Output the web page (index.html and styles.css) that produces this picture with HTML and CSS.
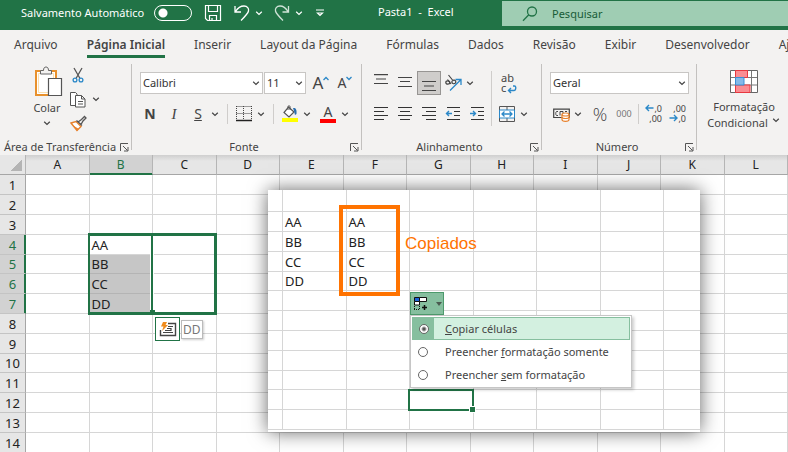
FILE: index.html
```
<!DOCTYPE html>
<html lang="pt-BR">
<head>
  <meta charset="UTF-8" />
  <meta name="viewport" content="width=device-width, initial-scale=1.0" />
  <title>Pasta1 - Excel</title>
  <link rel="stylesheet" href="styles.css">
</head>
<body>
  <svg class="defs" aria-hidden="true">
    <symbol id="chev" viewBox="0 0 10 10"><path d="M2.200 3.800 5 6.500l2.800-2.700" fill="none" stroke="currentColor" stroke-width="1.200"/></symbol>
    <symbol id="launcher" viewBox="0 0 9 9"><path d="M.5 8V.5H8M3 3l4.500 4.500M8 4v4H4" fill="none" stroke="#555" /></symbol>
  </svg>

  <header class="topbar">
    <div class="quick">
      <label class="autosave">Salvamento Automático <input type="checkbox" class="toggle"></label>
      <button class="q-btn save" aria-label="Salvar">
        <svg width="18" height="18" viewBox="0 0 18 18" fill="none" stroke="#fff" stroke-width="1.200"><path d="M1.500 1.500h15v15H3.500l-2-2zM4.500 1.500v6h9v-6M5.500 16.500v-5h7v5M8 16v-2"/></svg>
      </button>
      <button class="q-btn undo" aria-label="Desfazer">
        <svg width="16" height="18" viewBox="0 0 16 18" fill="none" stroke="#fff" stroke-width="1.300"><path d="M1 2v6h6M1.500 7.500C4 3.500 7 2 10 2c3.500 0 5 2.500 4.500 5-.5 2.500-4 6-7.500 9.500"/></svg>
      </button>
      <svg class="chev light"><use href="#chev"/></svg>
      <button class="q-btn redo" aria-label="Refazer">
        <svg width="16" height="18" viewBox="0 0 16 18" fill="none" stroke="#cfe3d7" stroke-width="1.300"><path d="M14.500 2v6h-6M14 7.500C11.500 3.500 9 2 6 2 2.500 2 1 4.500 1.500 7 2 9.500 5.500 13 9 16.500"/></svg>
      </button>
      <svg class="chev light"><use href="#chev"/></svg>
      <button class="q-btn more" aria-label="Personalizar">
        <svg width="8" height="8" viewBox="0 0 8 8" fill="none" stroke="#fff" stroke-width="1.200"><path d="M0 1h8M1.500 4 4 6.500 6.500 4z"/></svg>
      </button>
    </div>
    <div class="doc-title">Pasta1&nbsp; -&nbsp; Excel</div>
    <label class="search">
      <svg width="16" height="16" viewBox="0 0 16 16" fill="none" stroke="#217346" stroke-width="1.300"><circle cx="10" cy="5.500" r="4.500"/><path d="M6.800 8.800 1 14.800"/></svg>
      <input type="text" placeholder="Pesquisar">
    </label>
  </header>

  <nav class="tabs">
    <a href="#">Arquivo</a>
    <a href="#" class="active">Página Inicial</a>
    <a href="#">Inserir</a>
    <a href="#">Layout da Página</a>
    <a href="#">Fórmulas</a>
    <a href="#">Dados</a>
    <a href="#">Revisão</a>
    <a href="#">Exibir</a>
    <a href="#">Desenvolvedor</a>
    <a href="#">Ajuda</a>
  </nav>

  <section class="ribbon">
    <div class="group g-clip">
      <div class="clip-tools">
        <button class="big paste">
          <svg width="30" height="32" viewBox="0 0 30 32" fill="none">
            <path d="M2 5h20v24H2z" fill="#fff" stroke="#e8912d" stroke-width="2"/>
            <path d="M4.500 7.500h15v19h-15z" stroke="#fbe0b0"/>
            <path d="M6.500 8V4.500h3C9.500 2 10.500 1 12 1s2.500 1 2.500 3.500h3V8z" fill="#f3f2f1" stroke="#666"/>
            <path d="M14.500 12.500h13v17h-13z" fill="#fff" stroke="#555" stroke-width="1.200"/>
          </svg>
          <span>Colar</span>
          <svg class="chev"><use href="#chev"/></svg>
        </button>
        <div class="small-tools">
          <button class="btn" aria-label="Recortar">
            <svg width="16" height="16" viewBox="0 0 16 16" fill="none"><path d="M4 1l6 10.500M12 1 6 11.500" stroke="#555" stroke-width="1.300"/><circle cx="5" cy="13" r="1.900" stroke="#2b88c8" stroke-width="1.300"/><circle cx="11" cy="13" r="1.900" stroke="#2b88c8" stroke-width="1.300"/></svg>
          </button>
          <div class="drop">
            <button class="btn" aria-label="Copiar">
              <svg width="18" height="17" viewBox="0 0 18 17" fill="#fff" stroke="#555"><path d="M1.500 14.500V1.500h5l1.500 1.500v11.500z"/><path d="M6.500 4.500h6l3.500 3.500v8h-9.500zM12.500 4.500V8H16M9 10.500h5M9 13h5"/></svg>
            </button>
            <svg class="chev"><use href="#chev"/></svg>
          </div>
          <button class="btn" aria-label="Pincel de Formatação">
            <svg width="18" height="17" viewBox="0 0 18 17"><path d="M2 8l5-1.500 5 5L8 15.500z" fill="#fff" stroke="#e8822d" stroke-width="1.400"/><path d="M4 10.500l6 3.500-2 2z" fill="#e8822d"/><path d="M7.500 5.500l5.500 5M9 7l3.500-2.500L15.500 1.500 17 3l-3 3-2 3.500" fill="#f3f2f1" stroke="#555" stroke-width="1.300"/></svg>
          </button>
        </div>
      </div>
      <div class="group-label"><span>Área de Transferência</span><svg class="launch"><use href="#launcher"/></svg></div>
    </div>

    <div class="group g-font">
      <div class="row">
        <div class="combo font-name">
          <select aria-label="Fonte"><option>Calibri</option></select>
          <svg class="chev"><use href="#chev"/></svg>
        </div>
        <div class="combo font-size">
          <select aria-label="Tamanho"><option>11</option></select>
          <svg class="chev"><use href="#chev"/></svg>
        </div>
        <button class="btn grow" aria-label="Aumentar fonte">A<svg width="6" height="5" viewBox="0 0 6 5" fill="none" stroke="#2b88c8" stroke-width="1.300"><path d="M.5 4 3 1.500 5.500 4"/></svg></button>
        <button class="btn shrink" aria-label="Diminuir fonte">A<svg width="6" height="5" viewBox="0 0 6 5" fill="none" stroke="#2b88c8" stroke-width="1.300"><path d="M.5 1 3 3.500 5.500 1"/></svg></button>
      </div>
      <div class="row">
        <button class="btn bold">N</button>
        <button class="btn italic">I</button>
        <button class="btn under">S</button>
        <svg class="chev"><use href="#chev"/></svg>
        <span class="sep"></span>
        <div class="split">
          <button class="ico" aria-label="Bordas">
            <svg width="16" height="16" viewBox="0 0 16 16" fill="none" stroke="#444"><path d="M.5.5h15M.5 7.500h15M.5 0v13M7.500 0v13M15.500 0v13" stroke-dasharray="1 1"/><path d="M0 14.500h16" stroke="#222" stroke-width="1.500"/></svg>
          </button>
          <svg class="chev"><use href="#chev"/></svg>
        </div>
        <span class="sep"></span>
        <div class="split">
          <button class="ico" aria-label="Cor de preenchimento">
            <svg width="16" height="18" viewBox="0 0 16 18"><path d="M6.500 2 12 7l-5 5-5-4.500z" fill="#fff" stroke="#555" stroke-width="1.200"/><path d="M6 5V1.500c0-1 2-1 2 0V5" fill="none" stroke="#555"/><path d="M11 3c2.500-.5 4 1 3.500 6l-1.500 1-1-4z" fill="#2b6fb0"/><path d="M0 13h16v4H0z" fill="#ff0"/></svg>
          </button>
          <svg class="chev"><use href="#chev"/></svg>
        </div>
        <div class="split last">
          <button class="ico font-color" aria-label="Cor da fonte">A</button>
          <svg class="chev"><use href="#chev"/></svg>
        </div>
      </div>
      <div class="group-label"><span>Fonte</span><svg class="launch"><use href="#launcher"/></svg></div>
    </div>

    <div class="group g-align">
      <div class="align-tools">
        <div class="col">
          <div class="row">
            <button class="btn" aria-label="Alinhar em cima"><svg width="16" height="18" viewBox="0 0 16 18" stroke="#444" stroke-width="1.200"><path d="M1 .7h14M3 5h10M1 9.500h14"/></svg></button>
            <button class="btn" aria-label="Alinhar no meio"><svg width="16" height="18" viewBox="0 0 16 18" stroke="#444" stroke-width="1.200"><path d="M1 3.500h14M3 7.500h10M1 12.500h14"/></svg></button>
            <button class="btn pressed" aria-label="Alinhar embaixo"><svg width="16" height="18" viewBox="0 0 16 18" stroke="#444" stroke-width="1.200"><path d="M1 7.500h14M3 12h10M1 16.500h14"/></svg></button>
            <button class="btn" aria-label="Orientação"><svg width="18" height="18" viewBox="0 0 18 18" fill="none"><g stroke="#444" stroke-width="1.200"><ellipse cx="3.800" cy="8.500" rx="2" ry="1.700"/><path d="M3.500 5.500 7 10M8.300 6.800a2 1.800 0 1 0 .1-.1M4.500 1l4 5"/></g><path d="M6 16.500 16.500 6M11.500 5.500H17V11" stroke="#2b88c8" stroke-width="1.300"/></svg></button>
            <svg class="chev"><use href="#chev"/></svg>
          </div>
          <div class="row">
            <button class="btn" aria-label="Alinhar à esquerda"><svg width="16" height="16" viewBox="0 0 16 16" stroke="#333" stroke-width="1.200"><path d="M1 1.500h14M1 5.500h10M1 9.500h14M1 13.500h10"/></svg></button>
            <button class="btn" aria-label="Centralizar"><svg width="16" height="16" viewBox="0 0 16 16" stroke="#333" stroke-width="1.200"><path d="M1 1.500h14M3 5.500h10M1 9.500h14M3 13.500h10"/></svg></button>
            <button class="btn" aria-label="Alinhar à direita"><svg width="16" height="16" viewBox="0 0 16 16" stroke="#333" stroke-width="1.200"><path d="M1 1.500h14M5 5.500h10M1 9.500h14M5 13.500h10"/></svg></button>
            <button class="btn" aria-label="Diminuir recuo"><svg width="16" height="16" viewBox="0 0 16 16" fill="none" stroke="#333" stroke-width="1.200"><path d="M2 1.500h13M9 5.500h6M9 9.500h6M2 13.500h13"/><path d="M7 7.500H1.500M4 5 1.500 7.500 4 10" stroke="#2b88c8" stroke-width="1.400"/></svg></button>
            <button class="btn" aria-label="Aumentar recuo"><svg width="16" height="16" viewBox="0 0 16 16" fill="none" stroke="#333" stroke-width="1.200"><path d="M2 1.500h13M9 5.500h6M9 9.500h6M2 13.500h13"/><path d="M1 7.500h5.500M4 5l2.500 2.500L4 10" stroke="#2b88c8" stroke-width="1.400"/></svg></button>
          </div>
        </div>
        <span class="sep tall"></span>
        <div class="col">
          <div class="row">
            <button class="btn wrap" aria-label="Quebrar texto"><span>ab</span><span>c</span><svg width="10" height="9" viewBox="0 0 10 9" fill="none" stroke="#2b88c8" stroke-width="1.400"><path d="M6 1h1.500C9.500 1 9 5.500 7 5.500H1.500M4 3 1.500 5.500 4 8"/></svg></button>
          </div>
          <div class="row">
            <button class="btn" aria-label="Mesclar"><svg width="16" height="16" viewBox="0 0 16 16" fill="none"><path d="M.5.5h15v15H.5zM8 0v4M8 12v4" stroke="#555"/><path d="M.5 4h15v8H.5z" fill="#fff" stroke="#2b88c8"/><path d="M3 8h10M5.500 5.500 3 8l2.500 2.500M10.500 5.500 13 8l-2.500 2.500" stroke="#2b88c8" stroke-width="1.300"/></svg></button>
            <svg class="chev"><use href="#chev"/></svg>
          </div>
        </div>
      </div>
      <div class="group-label"><span>Alinhamento</span><svg class="launch"><use href="#launcher"/></svg></div>
    </div>

    <div class="group g-num">
      <div class="row">
        <div class="combo num-format">
          <select aria-label="Formato"><option>Geral</option></select>
          <svg class="chev"><use href="#chev"/></svg>
        </div>
      </div>
      <div class="row">
        <button class="btn" aria-label="Moeda"><svg width="17" height="16" viewBox="0 0 17 16" fill="none"><path d="M.7 3.200h15.600v8.300H.7z" stroke="#444" stroke-width="1.200"/><path d="M5 5.500H3.500c-1 .5-1 3.500 0 4H5M7 9.500v-4h3v4M12 5.500h2" stroke="#444"/><path d="M9 8.500v5c0 2.500 7 2.500 7 0v-5" fill="#fff" stroke="#e8822d" stroke-width="1.200"/><ellipse cx="12.500" cy="8.500" rx="3.500" ry="1.500" fill="#fff" stroke="#e8822d" stroke-width="1.200"/><path d="M9 11c0 2 7 2 7 0" stroke="#e8822d" stroke-width="1.200"/></svg></button>
        <svg class="chev"><use href="#chev"/></svg>
        <button class="btn percent">%</button>
        <button class="btn thousands">000</button>
        <span class="sep slim"></span>
        <button class="btn decimal" aria-label="Aumentar casas decimais"><span><svg width="9" height="8" viewBox="0 0 9 8" fill="none" stroke="#2b88c8" stroke-width="1.400"><path d="M8.500 4H1M4 1 1 4l3 3"/></svg>,0</span><span>,00</span></button>
        <button class="btn decimal" aria-label="Diminuir casas decimais"><span>,00</span><span><svg width="9" height="8" viewBox="0 0 9 8" fill="none" stroke="#2b88c8" stroke-width="1.400"><path d="M.5 4H8M5 1l3 3-3 3"/></svg>,0</span></button>
      </div>
      <div class="group-label"><span>Número</span><svg class="launch"><use href="#launcher"/></svg></div>
    </div>

    <div class="group g-styles">
      <button class="big cond">
        <svg width="28" height="23" viewBox="0 0 28 23"><path d="M.5.500h27v22H.5z" fill="#fff"/><path d="M.5 7.500h27M.5 15h27M5.500.5v22M21.500.5v22" stroke="#777" fill="none"/><path d="M.5.500h27v22H.5z" fill="none" stroke="#666"/><path d="M5.500.500h12v7h-12zM5.500 15h14.500v7.500H5.500z" fill="#f98d92" stroke="#e8383f"/><path d="M5.500 7.500h8.500V15H5.500z" fill="#83b9e8" stroke="#3a8fd4"/></svg>
        <span>Formatação</span>
        <span class="with-chev">Condicional <svg class="chev"><use href="#chev"/></svg></span>
      </button>
      <button class="big as-table"><span>Formatar como</span></button>
    </div>
  </section>

  <main class="sheet">
    <table class="grid">
      <thead>
        <tr><th class="corner"></th><th>A</th><th class="sel">B</th><th>C</th><th>D</th><th>E</th><th>F</th><th>G</th><th>H</th><th>I</th><th>J</th><th>K</th><th>L</th></tr>
      </thead>
      <tbody>
        <tr><th>1</th><td></td><td></td><td></td><td></td><td></td><td></td><td></td><td></td><td></td><td></td><td></td><td></td></tr>
        <tr><th>2</th><td></td><td></td><td></td><td></td><td></td><td></td><td></td><td></td><td></td><td></td><td></td><td></td></tr>
        <tr><th>3</th><td></td><td></td><td></td><td></td><td></td><td></td><td></td><td></td><td></td><td></td><td></td><td></td></tr>
        <tr><th class="sel">4</th><td></td><td>AA</td><td></td><td></td><td></td><td></td><td></td><td></td><td></td><td></td><td></td><td></td></tr>
        <tr><th class="sel">5</th><td></td><td class="picked">BB</td><td></td><td></td><td></td><td></td><td></td><td></td><td></td><td></td><td></td><td></td></tr>
        <tr><th class="sel">6</th><td></td><td class="picked">CC</td><td></td><td></td><td></td><td></td><td></td><td></td><td></td><td></td><td></td><td></td></tr>
        <tr><th class="sel">7</th><td></td><td class="picked">DD</td><td></td><td></td><td></td><td></td><td></td><td></td><td></td><td></td><td></td><td></td></tr>
        <tr><th>8</th><td></td><td></td><td></td><td></td><td></td><td></td><td></td><td></td><td></td><td></td><td></td><td></td></tr>
        <tr><th>9</th><td></td><td></td><td></td><td></td><td></td><td></td><td></td><td></td><td></td><td></td><td></td><td></td></tr>
        <tr><th>10</th><td></td><td></td><td></td><td></td><td></td><td></td><td></td><td></td><td></td><td></td><td></td><td></td></tr>
        <tr><th>11</th><td></td><td></td><td></td><td></td><td></td><td></td><td></td><td></td><td></td><td></td><td></td><td></td></tr>
        <tr><th>12</th><td></td><td></td><td></td><td></td><td></td><td></td><td></td><td></td><td></td><td></td><td></td><td></td></tr>
        <tr><th>13</th><td></td><td></td><td></td><td></td><td></td><td></td><td></td><td></td><td></td><td></td><td></td><td></td></tr>
        <tr><th>14</th><td></td><td></td><td></td><td></td><td></td><td></td><td></td><td></td><td></td><td></td><td></td><td></td></tr>
      </tbody>
    </table>

    <div class="range"><span class="range-mid"></span><span class="handle"></span></div>
    <div class="drag-tip">
      <button class="flash" aria-label="Preenchimento relâmpago">
        <svg width="18" height="17" viewBox="0 0 18 17" fill="none"><path d="M9 2.500h7.500v12H1.500V9" stroke="#444" stroke-width="1.400"/><path d="M9 5.500h5M4 11.500h10M6 9.500h6v-2H8" stroke="#444" stroke-width="1.200"/><path d="M4 1h4L6.500 4H9l-6 6 1.500-4.500H2z" fill="#f08c1e"/></svg>
      </button>
      <span class="tip">DD</span>
    </div>

    <div class="panel">
      <table class="grid mini">
        <colgroup><col class="c-first"><col><col><col><col><col><col><col class="c-last"></colgroup>
        <tbody>
          <tr><td></td><td></td><td></td><td></td><td></td><td></td><td></td><td></td></tr>
          <tr><td></td><td>AA</td><td>AA</td><td></td><td></td><td></td><td></td><td></td></tr>
          <tr><td></td><td>BB</td><td>BB</td><td></td><td></td><td></td><td></td><td></td></tr>
          <tr><td></td><td>CC</td><td>CC</td><td></td><td></td><td></td><td></td><td></td></tr>
          <tr><td></td><td>DD</td><td>DD</td><td></td><td></td><td></td><td></td><td></td></tr>
          <tr><td></td><td></td><td></td><td></td><td></td><td></td><td></td><td></td></tr>
          <tr><td></td><td></td><td></td><td></td><td></td><td></td><td></td><td></td></tr>
          <tr><td></td><td></td><td></td><td></td><td></td><td></td><td></td><td></td></tr>
          <tr><td></td><td></td><td></td><td></td><td></td><td></td><td></td><td></td></tr>
          <tr><td></td><td></td><td></td><td></td><td></td><td></td><td></td><td></td></tr>
          <tr><td></td><td></td><td></td><td></td><td></td><td></td><td></td><td></td></tr>
          <tr><td></td><td></td><td></td><td></td><td></td><td></td><td></td><td></td></tr>
        </tbody>
      </table>

      <div class="highlight"></div>
      <div class="note">Copiados</div>
      <div class="cursor"><span class="handle"></span></div>

      <button class="fill-btn" aria-label="Opções de autopreenchimento">
        <svg width="16" height="16" viewBox="0 0 16 16" fill="#fff" stroke="#111"><path d="M1.500 1.500h5v4h-5z" fill="#1b62d6"/><path d="M6.500 1.500h7v4h-7zM1.500 5.500h5v3.500h-5z"/><path d="M1 13.500h6M1.500 10v3M6.500 10v3" stroke-dasharray="1 1" fill="none"/><path d="M9 11.500h5M11.500 9v5" stroke-width="1.500"/></svg>
        <svg width="6" height="4" viewBox="0 0 6 4"><path d="M0 0h6L3 4z" fill="#4a5a50"/></svg>
      </button>
      <div class="menu">
        <label class="menu-item on"><span class="mark"><input type="radio" name="fill" checked></span><span><u>C</u>opiar células</span></label>
        <label class="menu-item"><span class="mark"><input type="radio" name="fill"></span><span>Preencher <u>f</u>ormatação somente</span></label>
        <label class="menu-item"><span class="mark"><input type="radio" name="fill"></span><span>Preencher <u>s</u>em formatação</span></label>
      </div>
    </div>
  </main>
</body>
</html>
```
FILE: styles.css
```
* {
  box-sizing: border-box;
}

body {
  margin: 0;
  height: 100vh;
  overflow: hidden;
  font-family: 'Noto Sans', 'Open Sans', sans-serif;
  font-size: 11px;
  line-height: 16px;
  color: #444;
  background: #fff;
}

button {
  border: none;
  background: none;
  padding: 0;
  margin: 0;
  font: inherit;
  color: inherit;
}

svg {
  flex: none;
}

.defs {
  position: absolute;
  width: 0;
  height: 0;
}

.chev {
  width: 10px;
  height: 10px;
  color: #444;
}

.launch {
  width: 9px;
  height: 9px;
}

/* title bar */
.topbar {
  display: grid;
  grid-template-columns: 330px 172px 1fr;
  height: 30px;
  padding-bottom: 4px;
  background: #217346;
  color: #fff;
}

.quick {
  display: flex;
  align-items: center;
  padding-left: 21px;
}

.autosave {
  display: flex;
  align-items: center;
  justify-content: space-between;
  width: 171px;
  white-space: nowrap;
}

.toggle {
  appearance: none;
  width: 38px;
  height: 16px;
  margin: 0;
  border: 1px solid #fff;
  border-radius: 8px;
  background: radial-gradient(circle at 8px 7px, #fff 4px, transparent 5px);
}

.q-btn {
  display: flex;
}

.save {
  margin-left: 12px;
}

.undo {
  margin-left: 12px;
}

.redo {
  margin-left: 10px;
}

.undo, .redo {
  margin-right: 4px;
}

.more {
  margin-left: 12px;
}

.chev.light {
  color: #fff;
}

.doc-title {
  padding-left: 48px;
  line-height: 24px;
}

.search {
  display: flex;
  align-items: center;
  gap: 14px;
  margin-top: 1px;
  padding-left: 20px;
  background: #9fcdb3;
}

.search input {
  flex: 1;
  min-width: 0;
  border: none;
  padding: 0;
  background: none;
  font: inherit;
}

.search input::placeholder {
  color: #185c37;
}

/* tabs */
.tabs {
  display: flex;
  gap: 29px;
  height: 30px;
  padding: 7px 0 0 14px;
  overflow: hidden;
  font-size: 12px;
  background: #f3f2f1;
}

.tabs a {
  height: 21px;
  white-space: nowrap;
  text-decoration: none;
  color: #444;
}

.tabs .active {
  font-weight: 600;
  border-bottom: 3px solid #217346;
}

/* ribbon */
.ribbon {
  display: flex;
  height: 95px;
  background: #f3f2f1;
  overflow: hidden;
}

.group {
  position: relative;
  display: flex;
  flex-direction: column;
  flex: none;
  gap: 7px;
  padding-top: 11px;
}

.group::after {
  content: '';
  position: absolute;
  right: 0;
  top: 4px;
  bottom: 5px;
  width: 1px;
  background: #c3c1bf;
}

.g-clip {
  width: 132px;
  gap: 0;
  padding-top: 3px;
}

.g-font {
  width: 230px;
  padding-left: 6px;
}

.g-align {
  width: 180px;
  padding-left: 7px;
}

.g-num {
  width: 155px;
  padding-left: 7px;
}

.g-styles {
  flex: 1;
  flex-direction: row;
  gap: 6px;
  padding: 10px 0 0 9px;
}

.g-styles::after {
  display: none;
}

.group-label {
  display: flex;
  align-items: center;
  justify-content: center;
  margin-top: auto;
  padding-right: 3px;
}

.group-label span {
  flex: 1;
  text-align: center;
  white-space: nowrap;
}

.row {
  display: flex;
  align-items: center;
  height: 24px;
}

.col {
  display: flex;
  flex-direction: column;
  gap: 7px;
}

.btn {
  display: flex;
  align-items: center;
  justify-content: center;
  width: 24px;
  height: 24px;
  flex: none;
}

.ico {
  display: flex;
  justify-content: center;
  width: 16px;
}

.split {
  display: flex;
  align-items: center;
  gap: 4px;
}

.split.last {
  margin-left: 8px;
}

.sep {
  width: 1px;
  height: 20px;
  margin: 0 8px 0 7px;
  background: #cfcdcb;
}

.sep.tall {
  height: 55px;
  margin: 0 3px 0 2px;
}

.sep.slim {
  margin: 0 3px 0 2px;
}

.clip-tools {
  display: flex;
  padding-left: 32px;
}

.big {
  display: flex;
  flex-direction: column;
  align-items: center;
  white-space: nowrap;
}

.paste {
  width: 30px;
}

.paste svg:first-child {
  margin: 3px 0 2px 3px;
}

.paste .chev {
  margin-top: 2px;
}

.small-tools {
  padding-left: 4px;
}

.drop {
  display: flex;
  align-items: center;
  gap: 1px;
}

.combo {
  position: relative;
}

.combo select {
  appearance: none;
  display: block;
  width: 100%;
  height: 22px;
  padding: 0 2px;
  border: 1px solid #c8c6c4;
  border-radius: 0;
  background: #fff;
  font: inherit;
  color: #333;
}

.combo .chev {
  position: absolute;
  right: 2px;
  top: 6px;
}

.font-name {
  width: 123px;
  margin: 0 1px 0 2px;
}

.font-size {
  width: 42px;
  margin-right: 3px;
}

.num-format {
  width: 139px;
  margin-left: 1px;
}

.grow {
  font-size: 17px;
}

.shrink {
  font-size: 14px;
}

.grow svg, .shrink svg {
  margin-bottom: 9px;
}

.bold {
  font-size: 14px;
  font-weight: 700;
}

.italic {
  font-family: 'Liberation Serif', serif;
  font-size: 15px;
  font-style: italic;
}

.under {
  font-size: 14px;
  text-decoration: underline;
}

.font-color {
  height: 18px;
  border-bottom: 4px solid #f00;
  font-size: 14px;
  line-height: 13px;
}

.align-tools {
  display: flex;
  align-items: center;
}

.pressed {
  background: #cfcdcb;
  border: 1px solid #979593;
}

.wrap {
  position: relative;
  flex-direction: column;
  align-items: flex-start;
  margin-left: 1px;
  padding-left: 5px;
  line-height: 10px;
}

.wrap svg {
  position: absolute;
  right: 3px;
  bottom: 1px;
}

.percent {
  margin-left: 5px;
  font-family: 'Open Sans', sans-serif;
  font-size: 18px;
  font-weight: 300;
}

.thousands {
  font-size: 9px;
  color: #777;
}

.decimal {
  flex-direction: column;
  align-items: flex-end;
  padding-right: 4px;
  font-size: 9px;
  line-height: 10px;
}

.decimal span {
  display: flex;
}

.cond {
  width: 76px;
}

.cond svg:first-child {
  margin-bottom: 6px;
}

.with-chev {
  display: flex;
  align-items: center;
  gap: 3px;
}

.as-table {
  padding-top: 29px;
}

/* worksheet */
.sheet {
  position: relative;
}

.grid {
  width: 100%;
  table-layout: fixed;
  border-collapse: separate;
  border-spacing: 0;
  color: #222;
}

.grid tr {
  height: 20px;
}

.grid tbody tr:nth-child(5n) {
  height: 19px;
}

.grid th, .grid td {
  padding: 0 2px;
  border-right: 1px solid #d6d6d6;
  border-bottom: 1px solid #d6d6d6;
  font-size: 13px;
  font-weight: 400;
  line-height: 18px;
  text-align: left;
}

.grid th {
  background: #e6e6e6;
  border-color: #c4c4c4;
  text-align: center;
}

.grid thead th {
  background: linear-gradient(#cfcfcf, #e6e6e6 6px);
  border-right-color: #b5b5b5;
  border-bottom-color: #a6a6a6;
  font-size: 12px;
}

.grid tbody th {
  border-right-color: #a6a6a6;
}

.grid thead .corner {
  width: 26px;
  background: linear-gradient(135deg, transparent 50%, #b4b4b4 50%) 11px 5px / 11px 11px no-repeat, #e6e6e6;
}

.grid thead .sel {
  background: #d2d2d2;
  color: #217346;
  box-shadow: inset 0 -1px #217346;
  border-bottom-color: #217346;
}

.grid tbody .sel {
  background: #d2d2d2;
  color: #217346;
  box-shadow: inset -1px 0 #217346;
  border-right-color: #217346;
}

.grid .picked {
  background: #c6c6c6;
  border-bottom-color: #b4b4b4;
}

.range {
  position: absolute;
  left: 88px;
  top: 78px;
  width: 129px;
  height: 82px;
  border: 3px solid #217346;
  border-left-width: 2px;
}

.range-mid {
  position: absolute;
  left: 60px;
  top: 0;
  bottom: 0;
  width: 4px;
  border: 1px solid #fff;
  border-width: 0 1px;
  background: #217346;
}

.handle {
  position: absolute;
  width: 5px;
  height: 5px;
  background: #217346;
}

.range .handle {
  left: 60px;
  bottom: -3px;
}

.drag-tip {
  position: absolute;
  left: 155px;
  top: 162px;
  display: flex;
  align-items: center;
  gap: 1px;
}

.flash {
  display: flex;
  align-items: center;
  justify-content: center;
  width: 25px;
  height: 24px;
  border: 1px solid #217346;
  background: #fff;
}

.tip {
  height: 19px;
  padding: 0 1px;
  border: 1px solid #bbb;
  background: #fff;
  box-shadow: 1px 1px 2px rgba(0,0,0,0.2);
  color: #777;
  font-size: 12px;
  line-height: 17px;
}

/* result panel */
.panel {
  position: absolute;
  left: 268px;
  top: 35px;
  width: 432px;
  height: 242px;
  background: #fff;
  box-shadow: 0 0 18px rgba(0,0,0,0.6);
}

.mini tbody tr:first-child {
  height: 22px;
}

.c-first {
  width: 15px;
}

.c-last {
  width: 36px;
}

.mini td:last-child {
  border-right: none;
}

.highlight {
  position: absolute;
  left: 71px;
  top: 15px;
  width: 61px;
  height: 91px;
  border: 4px solid #ff7300;
}

.note {
  position: absolute;
  left: 137px;
  top: 44px;
  font-family: 'Liberation Sans', Arial, sans-serif;
  font-size: 17px;
  line-height: 20px;
  color: #ff7300;
}

.cursor {
  position: absolute;
  left: 140px;
  top: 199px;
  width: 66px;
  height: 22px;
  border: 2px solid #217346;
}

.cursor .handle {
  right: -3px;
  bottom: -3px;
  outline: 1px solid #fff;
}

.fill-btn {
  position: absolute;
  left: 142px;
  top: 102px;
  display: flex;
  align-items: center;
  gap: 7px;
  width: 34px;
  height: 23px;
  padding-left: 2px;
  border: 1px solid #4d9a6c;
  background: #86bf9f;
}

.menu {
  position: absolute;
  left: 142px;
  top: 125px;
  width: 222px;
  padding: 1px;
  border: 1px solid #c6c6c6;
  background: #fff;
  box-shadow: 2px 2px 3px rgba(0,0,0,0.2);
}

.menu-item {
  display: flex;
  align-items: center;
  gap: 11px;
  height: 23px;
  white-space: nowrap;
}

.menu-item.on {
  background: #d3f0e0;
  border: 1px solid #86bf9f;
}

.mark {
  display: flex;
  align-items: center;
  justify-content: center;
  width: 22px;
  height: 100%;
}

.on .mark {
  background: #86bf9f;
  width: 21px;
}

.menu input {
  appearance: none;
  width: 10px;
  height: 10px;
  margin: 0;
  border: 1px solid #666;
  border-radius: 50%;
  background: #fff;
}

.menu input:checked {
  background: radial-gradient(circle, #555 1px, #fff 3px);
}
```
